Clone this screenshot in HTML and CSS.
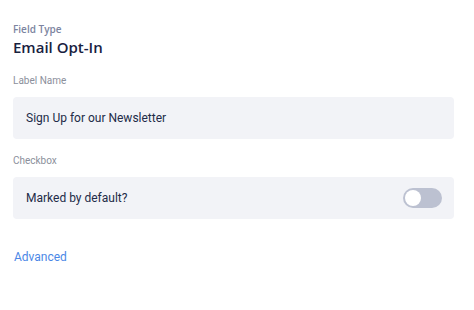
FILE: index.html
```html
<!DOCTYPE html>
<html>
<head>
<meta charset="utf-8">
<link rel="stylesheet" href="styles.css">
</head>
<body>
<div class="panel">
  <div class="type-block">
    <div class="type-label">Field Type</div>
    <div class="type-value">Email Opt-In</div>
  </div>
  <div class="field">
    <div class="field-label">Label Name</div>
    <div class="field-box">Sign Up for our Newsletter</div>
  </div>
  <div class="field">
    <div class="field-label">Checkbox</div>
    <div class="field-box toggle-row">
      <span>Marked by default?</span>
      <span class="switch"><span class="knob"></span></span>
    </div>
  </div>
  <a class="advanced" href="#">Advanced</a>
</div>
</body>
</html>
```
FILE: styles.css
```css
html, body {
  margin: 0;
  padding: 0;
  background: #ffffff;
}
.panel {
  width: 441px;
  padding: 22px 0 0 13px;
  font-family: Roboto, "Liberation Sans", sans-serif;
}
.type-block {
  display: flex;
  flex-direction: column;
}
.type-label {
  font-family: "Open Sans", sans-serif;
  font-size: 10px;
  font-weight: 600;
  color: #7c84a0;
  line-height: 14px;
}
.type-value {
  font-family: "Open Sans", sans-serif;
  font-size: 15px;
  font-weight: 600;
  color: #18213f;
  line-height: 20px;
  margin-top: 1px;
}
.field {
  margin-top: 17px;
}
.field-label {
  font-size: 10px;
  color: #8b8f9b;
  line-height: 14px;
  margin-bottom: 9px;
}
.field-box {
  height: 42px;
  box-sizing: border-box;
  background: #f2f3f7;
  border-radius: 4px;
  padding: 0 13px;
  display: flex;
  align-items: center;
  font-size: 12px;
  color: #222b48;
}
.field + .field {
  margin-top: 15px;
}
.toggle-row {
  justify-content: space-between;
  padding-right: 12px;
}
.switch {
  width: 39px;
  height: 20px;
  border-radius: 10px;
  background: #bcc1d1;
  display: flex;
  align-items: center;
  padding: 0 2px;
  box-sizing: border-box;
}
.knob {
  width: 16px;
  height: 16px;
  border-radius: 50%;
  background: #ffffff;
}
.advanced {
  display: block;
  margin-top: 31px;
  margin-left: 1px;
  font-size: 12px;
  color: #4b87e6;
  text-decoration: none;
  line-height: 14px;
}
```
